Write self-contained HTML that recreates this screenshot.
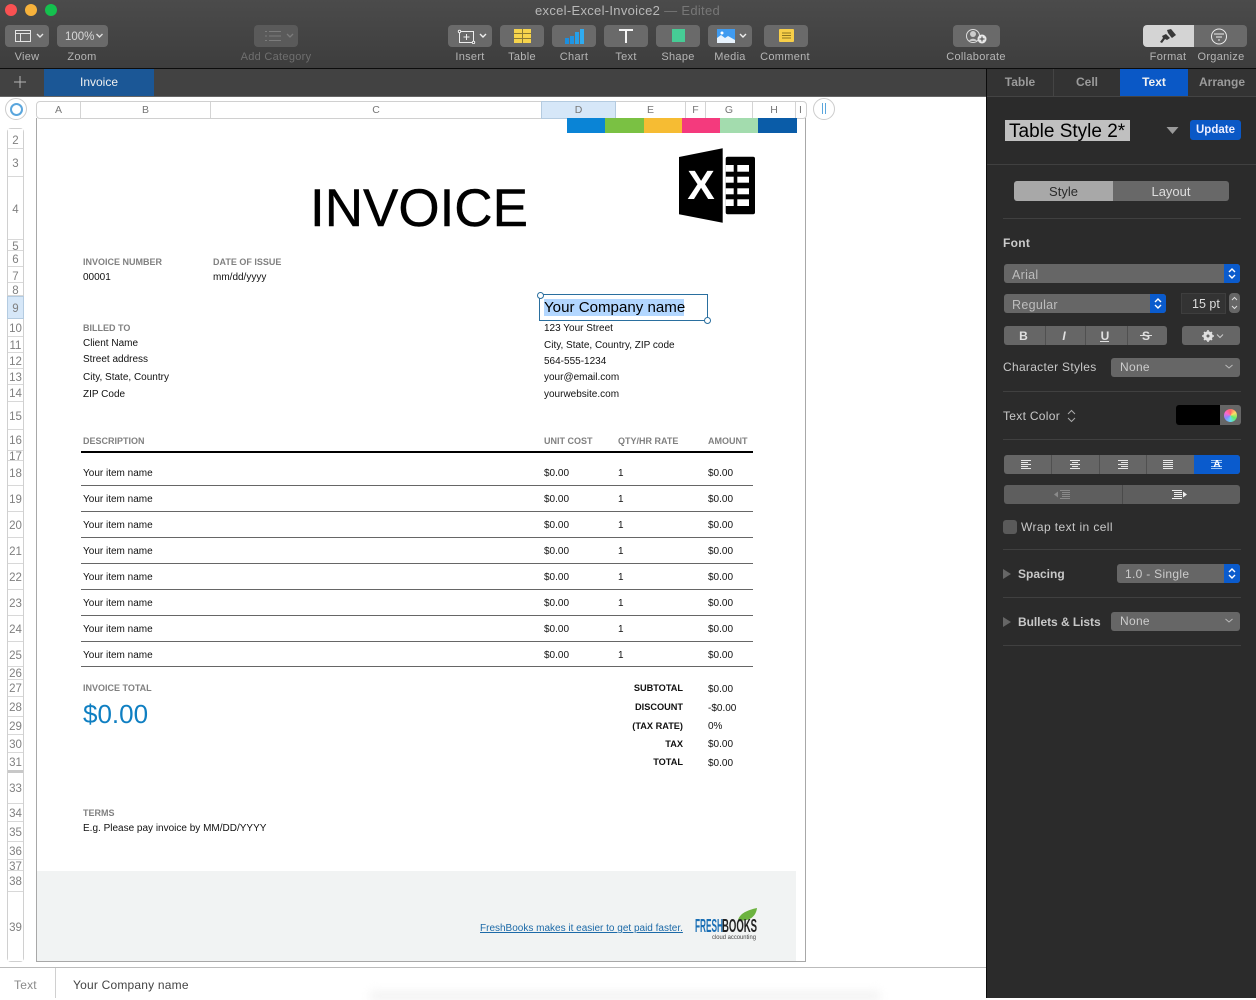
<!DOCTYPE html>
<html><head><meta charset="utf-8"><style>
html,body{margin:0;padding:0}
body{width:1256px;height:998px;position:relative;overflow:hidden;background:#fff;font-family:"Liberation Sans",sans-serif}
div,span.a,svg{position:absolute}
.t{white-space:nowrap;line-height:20px;height:20px}
.l{font-size:11px;color:#b5b5b5;letter-spacing:.3px;text-align:center;top:47px;width:80px;line-height:20px;height:20px;white-space:nowrap}
.b{top:25px;height:22px;background:#6a6a6a;border-radius:4px}
.d{font-size:10px;color:#111;white-space:nowrap;line-height:20px;height:20px;margin-top:1px}
.h{font-size:9px;font-weight:bold;color:#808080;white-space:nowrap;line-height:20px;height:20px}
.k{font-size:9.200px;font-weight:bold;color:#111;white-space:nowrap;line-height:20px;height:20px;text-align:right;width:100px;left:583px}
.r{left:8px;width:15px;text-align:center;color:#808080;font-size:11.500px;border-bottom:1px solid #d8d8d8;background:#fff;box-sizing:border-box;padding-top:1px}
.c{top:102px;height:16px;line-height:16px;text-align:center;color:#777;font-size:10.500px;border-right:1px solid #d4d4d4;box-sizing:border-box}
.ln{left:81px;width:672px;height:1px;background:#666}
.s{left:1003px;width:238px;height:1px;background:#404040}
.p{background:#666;border-radius:3px;height:19px}
.st{background:#0a5bcd;border-radius:0 3px 3px 0;height:19px;width:16px}
.side{font-size:12px;color:#c8c8c8;letter-spacing:.3px;white-space:nowrap;line-height:20px;height:20px}
</style></head><body>

<!-- toolbar -->
<div style="left:0;top:0;width:1256px;height:68px;background:linear-gradient(#4b4b4b,#3d3d3d)"></div>
<div style="left:0;top:68px;width:1256px;height:1px;background:#0c0c0c"></div>
<div style="left:5px;top:4px;width:12px;height:12px;border-radius:50%;background:#f95152"></div>
<div style="left:25px;top:4px;width:12px;height:12px;border-radius:50%;background:#f7b23b"></div>
<div style="left:45px;top:4px;width:12px;height:12px;border-radius:50%;background:#14c14e"></div>
<div class="t" style="left:535px;top:1px;font-size:13px;color:#b8b8b8;letter-spacing:.3px">excel-Excel-Invoice2 <span style="color:#777">— Edited</span></div>

<div class="b" style="left:5px;width:44px"></div>
<svg style="left:14px;top:29px" width="32" height="14" fill="none" stroke="#e4e4e4" stroke-width="1"><rect x="1.500" y="1.500" width="15" height="11"/><path d="M1.500 4.500H16.500M6.500 4.500V12.500"/><path d="M23 5l3 3 3-3" stroke-width="1.400"/></svg>
<div class="b" style="left:57px;width:51px"></div>
<div class="t" style="left:65px;top:26px;font-size:11.500px;color:#d8d8d8;margin-top:1px">100%</div>
<svg style="left:95px;top:32px" width="10" height="8" fill="none" stroke="#ddd" stroke-width="1.400"><path d="M1.500 2l3 3 3-3"/></svg>
<div class="b" style="left:254px;width:44px;background:#5a5a5a"></div>
<svg style="left:263px;top:29px" width="32" height="14" fill="none" stroke="#7c7c7c"><path d="M6 2.500H18M6 7H18M6 11.500H18"/><path d="M2 2.500H4M2 7H4M2 11.500H4"/><path d="M24 5l3 3 3-3" stroke-width="1.300"/></svg>

<div class="l" style="left:-13px">View</div>
<div class="l" style="left:42px">Zoom</div>
<div class="l" style="left:236px;color:#6f6f6f">Add Category</div>

<div class="b" style="left:448px;width:44px"></div>
<svg style="left:457px;top:28px" width="32" height="16" fill="none" stroke="#eee"><rect x="2.500" y="3.500" width="14" height="11"/><path d="M9.500 6V12M6.500 9H12.500"/><circle cx="2.500" cy="3.500" r="1.200" fill="#555"/><circle cx="16.500" cy="14.500" r="1.200" fill="#555"/><path d="M23 6l3 3 3-3" stroke-width="1.400"/></svg>
<div class="b" style="left:500px;width:44px"></div>
<svg style="left:514px;top:29px" width="17" height="14"><rect width="17" height="14" fill="#f6d44c"/><path d="M0 4.500H17M0 9.500H17M8.500 0V14" stroke="#8a7a35" stroke-width="1"/></svg>
<div class="b" style="left:552px;width:44px"></div>
<svg style="left:565px;top:28px" width="19" height="16"><rect x="0" y="10" width="4" height="6" fill="#1a8fe0"/><rect x="5" y="8" width="4" height="8" fill="#1f95e4"/><rect x="10" y="4" width="4" height="12" fill="#26a0ea"/><rect x="15" y="1" width="4" height="15" fill="#2fabf0"/></svg>
<div class="b" style="left:604px;width:44px"></div>
<svg style="left:618px;top:28px" width="16" height="16" fill="#f5f5f5"><rect x="1" y="1" width="14" height="2"/><rect x="7" y="1" width="2" height="14"/></svg>
<div class="b" style="left:656px;width:44px"></div>
<div style="left:672px;top:29px;width:13px;height:13px;background:#46cc95"></div>
<div class="b" style="left:708px;width:44px"></div>
<svg style="left:717px;top:29px" width="32" height="14"><rect width="18" height="14" fill="#3f9bf0"/><path d="M0 14V9l4-3 4 3 3-2 7 4v3z" fill="#e8f3fd"/><circle cx="5" cy="4" r="1.500" fill="#fff"/><path d="M23 5l3 3 3-3" fill="none" stroke="#eee" stroke-width="1.400"/></svg>
<div class="b" style="left:764px;width:44px"></div>
<svg style="left:779px;top:29px" width="15" height="13"><rect width="15" height="13" rx="1" fill="#f8cf48"/><path d="M3 4H12M3 6.500H12M3 9H12" stroke="#8c7420"/></svg>

<div class="l" style="left:430px">Insert</div>
<div class="l" style="left:482px">Table</div>
<div class="l" style="left:534px">Chart</div>
<div class="l" style="left:586px">Text</div>
<div class="l" style="left:638px">Shape</div>
<div class="l" style="left:690px">Media</div>
<div class="l" style="left:745px">Comment</div>

<div class="b" style="left:953px;width:47px"></div>
<svg style="left:966px;top:28px" width="23" height="17"><circle cx="7" cy="8" r="6.500" fill="none" stroke="#ddd"/><circle cx="7" cy="6" r="3" fill="#ccc"/><path d="M3 13c1-3 7-3 8 0z" fill="#ccc"/><circle cx="16" cy="11" r="4.500" fill="#e8e8e8"/><path d="M16 8.500V13.500M13.500 11H18.500" stroke="#444"/></svg>
<div class="l" style="left:936px">Collaborate</div>

<div class="b" style="left:1143px;width:51px;background:#d4d4d4;border-radius:4px 0 0 4px"></div>
<div class="b" style="left:1194px;width:53px;background:#6a6a6a;border-radius:0 4px 4px 0"></div>
<svg style="left:1159px;top:28px" width="18" height="17" fill="#383838"><path d="M8 2l4-1 5 6-4 3-1-1-3-4z"/><path d="M7 6l4 4-3 2-2-1-3 4-2-1 3-4-1-2z"/></svg>
<svg style="left:1210px;top:28px" width="18" height="17" fill="none" stroke="#eee"><circle cx="9" cy="8.500" r="7.500"/><path d="M4 6H14M6 9H12M8 12H10"/></svg>
<div class="l" style="left:1128px">Format</div>
<div class="l" style="left:1181px">Organize</div>

<!-- tab bar -->
<div style="left:0;top:69px;width:986px;height:27px;background:#424242"></div>
<div style="left:0;top:96px;width:986px;height:1px;background:#666"></div>
<svg style="left:14px;top:76px" width="12" height="12" stroke="#b4b4b4"><path d="M6 0V12M0 6H12"/></svg>
<div style="left:44px;top:69px;width:110px;height:27px;background:#1b5796"></div>
<div class="t" style="left:44px;top:72px;width:110px;text-align:center;font-size:12px;color:#f0f0f0">Invoice</div>

<!-- column headers -->
<div style="left:36px;top:101px;width:769px;height:16px;background:#fff;border:1px solid #d0d0d0;border-radius:4px;box-sizing:content-box"></div>
<div style="left:5px;top:98px;width:20px;height:20px;border-radius:50%;border:1px solid #ccc;background:#fff"></div>
<div style="left:10px;top:103px;width:9px;height:9px;border-radius:50%;border:2px solid #5aa6dd"></div>
<div class="c" style="left:37px;width:44px">A</div>
<div class="c" style="left:81px;width:130px">B</div>
<div class="c" style="left:211px;width:331px">C</div>
<div class="c" style="left:541px;width:75px;background:#d6e7f8;border:1px solid #b4cbe0;top:101px;height:18px">D</div>
<div class="c" style="left:616px;width:70px">E</div>
<div class="c" style="left:686px;width:20px">F</div>
<div class="c" style="left:706px;width:47px">G</div>
<div class="c" style="left:753px;width:43px">H</div>
<div class="c" style="left:796px;width:9px;border:0">I</div>
<div style="left:813px;top:98px;width:20px;height:20px;border-radius:50%;border:1px solid #ccc;background:#fff"></div>
<div style="left:822px;top:103px;width:1px;height:11px;background:#5aa6dd"></div>
<div style="left:825px;top:103px;width:1px;height:11px;background:#5aa6dd"></div>

<!-- row headers -->
<div style="left:7px;top:128px;width:17px;height:834px;border:1px solid #d0d0d0;border-radius:4px;box-sizing:border-box;background:#fff"></div>
<div class="r" style="top:129px;height:20px;line-height:22px">2</div>
<div class="r" style="top:149px;height:28px;line-height:28px">3</div>
<div class="r" style="top:177px;height:63px;line-height:64px">4</div>
<div class="r" style="top:240px;height:11px;line-height:12px">5</div>
<div class="r" style="top:251px;height:16px;line-height:17px">6</div>
<div class="r" style="top:267px;height:16px;line-height:18px">7</div>
<div class="r" style="top:283px;height:13px;line-height:14px">8</div>
<div class="r" style="top:296px;height:23px;line-height:22px;background:#d6e7f8;border:1px solid #b4cbe0;left:7px;width:17px">9</div>
<div class="r" style="top:319px;height:18px;line-height:18px">10</div>
<div class="r" style="top:337px;height:16px;line-height:16px">11</div>
<div class="r" style="top:353px;height:16px;line-height:16px">12</div>
<div class="r" style="top:369px;height:16px;line-height:16px">13</div>
<div class="r" style="top:385px;height:17px;line-height:17px">14</div>
<div class="r" style="top:402px;height:28px;line-height:28px">15</div>
<div class="r" style="top:430px;height:21px;line-height:21px">16</div>
<div class="r" style="top:451px;height:10px;line-height:10px">17</div>
<div class="r" style="top:461px;height:25px;line-height:25px">18</div>
<div class="r" style="top:486px;height:26px;line-height:26px">19</div>
<div class="r" style="top:512px;height:26px;line-height:26px">20</div>
<div class="r" style="top:538px;height:26px;line-height:26px">21</div>
<div class="r" style="top:564px;height:26px;line-height:26px">22</div>
<div class="r" style="top:590px;height:26px;line-height:26px">23</div>
<div class="r" style="top:616px;height:26px;line-height:26px">24</div>
<div class="r" style="top:642px;height:25px;line-height:26px">25</div>
<div class="r" style="top:667px;height:13px;line-height:13px">26</div>
<div class="r" style="top:680px;height:17px;line-height:17px">27</div>
<div class="r" style="top:697px;height:20px;line-height:20px">28</div>
<div class="r" style="top:717px;height:18px;line-height:18px">29</div>
<div class="r" style="top:735px;height:18px;line-height:18px">30</div>
<div class="r" style="top:753px;height:18px;line-height:18px">31</div>
<div style="left:8px;top:770px;width:15px;height:3px;background:#c8c8c8"></div>
<div class="r" style="top:773px;height:31px;line-height:30px">33</div>
<div class="r" style="top:804px;height:18px;line-height:18px">34</div>
<div class="r" style="top:822px;height:20px;line-height:20px">35</div>
<div class="r" style="top:842px;height:18px;line-height:18px">36</div>
<div class="r" style="top:860px;height:11px;line-height:12px">37</div>
<div class="r" style="top:871px;height:21px;line-height:21px">38</div>
<div class="r" style="top:892px;height:69px;line-height:70px;border:0">39</div>

<!-- page -->
<div style="left:36px;top:118px;width:1px;height:844px;background:#a8a8a8"></div>
<div style="left:805px;top:118px;width:1px;height:844px;background:#a8a8a8"></div>
<div style="left:36px;top:961px;width:770px;height:1px;background:#a8a8a8"></div>
<div style="left:37px;top:871px;width:759px;height:90px;background:#f1f3f3"></div>

<div style="left:567px;top:118px;width:38px;height:15px;background:#0a84d6"></div>
<div style="left:605px;top:118px;width:39px;height:15px;background:#7ac143"></div>
<div style="left:644px;top:118px;width:38px;height:15px;background:#f6bc33"></div>
<div style="left:682px;top:118px;width:38px;height:15px;background:#f43a7d"></div>
<div style="left:720px;top:118px;width:38px;height:15px;background:#a3dcae"></div>
<div style="left:758px;top:118px;width:39px;height:15px;background:#0a5ca8"></div>

<div class="t" style="left:310px;top:199px;font-size:53px;color:#000;-webkit-text-stroke:.4px #000">INVOICE</div>

<svg style="left:678px;top:148px" width="78" height="76"><path d="M1 9L44.700 0.300V74.700L1 66.300Z" fill="#000"/><rect x="47.700" y="8.700" width="29.300" height="57.600" rx="2" fill="#000"/><g fill="#fff"><rect x="47.700" y="17" width="8" height="6.700"/><rect x="59.300" y="17" width="11.700" height="6.700"/><rect x="47.700" y="28.700" width="8" height="6"/><rect x="59.300" y="28.700" width="11.700" height="6"/><rect x="47.700" y="40.300" width="8" height="6"/><rect x="59.300" y="40.300" width="11.700" height="6"/><rect x="47.700" y="51.300" width="8" height="6.700"/><rect x="59.300" y="51.300" width="11.700" height="6.700"/></g><text x="23" y="51" font-family="Liberation Sans" font-weight="bold" font-size="41" fill="#fff" text-anchor="middle">X</text></svg>

<div class="h" style="left:83px;top:252px">INVOICE NUMBER</div>
<div class="h" style="left:213px;top:252px">DATE OF ISSUE</div>
<div class="d" style="left:83px;top:267px">00001</div>
<div class="d" style="left:213px;top:267px">mm/dd/yyyy</div>

<div style="left:539px;top:294px;width:167px;height:25px;border:1px solid #2a6f9f"></div>
<div style="left:544px;top:299px;width:140px;height:17px;background:#b3d7ff"></div>
<div class="t" style="left:544px;top:298px;font-size:15.100px;color:#000">Your Company name</div>
<div style="left:537px;top:292px;width:5px;height:5px;border-radius:50%;border:1px solid #2a6f9f;background:#fff"></div>
<div style="left:704px;top:317px;width:5px;height:5px;border-radius:50%;border:1px solid #2a6f9f;background:#fff"></div>

<div class="h" style="left:83px;top:318px">BILLED TO</div>
<div class="d" style="left:83px;top:333px">Client Name</div>
<div class="d" style="left:83px;top:349px">Street address</div>
<div class="d" style="left:83px;top:367px">City, State, Country</div>
<div class="d" style="left:83px;top:384px">ZIP Code</div>
<div class="d" style="left:544px;top:318px">123 Your Street</div>
<div class="d" style="left:544px;top:335px">City, State, Country, ZIP code</div>
<div class="d" style="left:544px;top:351px">564-555-1234</div>
<div class="d" style="left:544px;top:367px">your@email.com</div>
<div class="d" style="left:544px;top:384px">yourwebsite.com</div>

<div class="h" style="left:83px;top:431px">DESCRIPTION</div>
<div class="h" style="left:544px;top:431px">UNIT COST</div>
<div class="h" style="left:618px;top:431px">QTY/HR RATE</div>
<div class="h" style="left:708px;top:431px">AMOUNT</div>
<div style="left:81px;top:451px;width:672px;height:2px;background:#000"></div>

<div class="d" style="left:83px;top:463px">Your item name</div><div class="d" style="left:544px;top:463px">$0.00</div><div class="d" style="left:618px;top:463px">1</div><div class="d" style="left:708px;top:463px">$0.00</div><div class="ln" style="top:485px"></div>
<div class="d" style="left:83px;top:489px">Your item name</div><div class="d" style="left:544px;top:489px">$0.00</div><div class="d" style="left:618px;top:489px">1</div><div class="d" style="left:708px;top:489px">$0.00</div><div class="ln" style="top:511px"></div>
<div class="d" style="left:83px;top:515px">Your item name</div><div class="d" style="left:544px;top:515px">$0.00</div><div class="d" style="left:618px;top:515px">1</div><div class="d" style="left:708px;top:515px">$0.00</div><div class="ln" style="top:537px"></div>
<div class="d" style="left:83px;top:541px">Your item name</div><div class="d" style="left:544px;top:541px">$0.00</div><div class="d" style="left:618px;top:541px">1</div><div class="d" style="left:708px;top:541px">$0.00</div><div class="ln" style="top:563px"></div>
<div class="d" style="left:83px;top:567px">Your item name</div><div class="d" style="left:544px;top:567px">$0.00</div><div class="d" style="left:618px;top:567px">1</div><div class="d" style="left:708px;top:567px">$0.00</div><div class="ln" style="top:589px"></div>
<div class="d" style="left:83px;top:593px">Your item name</div><div class="d" style="left:544px;top:593px">$0.00</div><div class="d" style="left:618px;top:593px">1</div><div class="d" style="left:708px;top:593px">$0.00</div><div class="ln" style="top:615px"></div>
<div class="d" style="left:83px;top:619px">Your item name</div><div class="d" style="left:544px;top:619px">$0.00</div><div class="d" style="left:618px;top:619px">1</div><div class="d" style="left:708px;top:619px">$0.00</div><div class="ln" style="top:641px"></div>
<div class="d" style="left:83px;top:645px">Your item name</div><div class="d" style="left:544px;top:645px">$0.00</div><div class="d" style="left:618px;top:645px">1</div><div class="d" style="left:708px;top:645px">$0.00</div><div class="ln" style="top:666px"></div>

<div class="h" style="left:83px;top:678px">INVOICE TOTAL</div>
<div class="t" style="left:83px;top:704px;font-size:26px;color:#0f7fc2">$0.00</div>
<div class="k" style="top:678px">SUBTOTAL</div><div class="d" style="left:708px;top:679px">$0.00</div>
<div class="k" style="top:697px">DISCOUNT</div><div class="d" style="left:708px;top:698px">-$0.00</div>
<div class="k" style="top:716px">(TAX RATE)</div><div class="d" style="left:708px;top:716px">0%</div>
<div class="k" style="top:734px">TAX</div><div class="d" style="left:708px;top:734px">$0.00</div>
<div class="k" style="top:752px">TOTAL</div><div class="d" style="left:708px;top:753px">$0.00</div>

<div class="h" style="left:83px;top:803px">TERMS</div>
<div class="d" style="left:83px;top:818px">E.g. Please pay invoice by MM/DD/YYYY</div>

<div class="t" style="left:480px;top:919px;font-size:10px;color:#1c6aa8;text-decoration:underline">FreshBooks makes it easier to get paid faster.</div>
<svg style="left:693px;top:907px" width="66" height="36"><path d="M45 13C47 6 55 3 64 1C63 9 57 15 45 13Z" fill="#6cb33f"/><text x="2" y="25" font-family="Liberation Sans" font-weight="bold" font-size="18" fill="#1a6fb5" textLength="28" lengthAdjust="spacingAndGlyphs">FRESH</text><text x="29" y="25" font-family="Liberation Sans" font-weight="bold" font-size="18" fill="#222" textLength="35" lengthAdjust="spacingAndGlyphs">BOOKS</text><text x="19" y="32" font-family="Liberation Sans" font-size="6" fill="#444" textLength="44" lengthAdjust="spacingAndGlyphs">cloud accounting</text></svg>

<!-- bottom bar -->
<div style="left:0;top:967px;width:986px;height:1px;background:#bbb"></div>
<div style="left:0;top:968px;width:986px;height:30px;background:#fff"></div>
<div style="left:370px;top:992px;width:510px;height:8px;background:#f0f0f0;filter:blur(5px)"></div>
<div style="left:55px;top:968px;width:1px;height:30px;background:#d0d0d0"></div>
<div class="t" style="left:14px;top:975px;font-size:12px;color:#8a8a8a;letter-spacing:.2px">Text</div>
<div class="t" style="left:73px;top:975px;font-size:12px;color:#444;letter-spacing:.2px">Your Company name</div>

<!-- sidebar -->
<div style="left:986px;top:69px;width:270px;height:929px;background:#2b2b2b"></div>
<div style="left:986px;top:69px;width:1px;height:929px;background:#0c0c0c"></div>
<div style="left:987px;top:69px;width:269px;height:27px;background:#333"></div>
<div style="left:987px;top:96px;width:269px;height:1px;background:#444"></div>
<div style="left:1053px;top:69px;width:1px;height:27px;background:#444"></div>
<div style="left:1120px;top:69px;width:68px;height:27px;background:#0a58c6"></div>
<div class="t" style="left:987px;top:72px;width:66px;text-align:center;font-size:12px;font-weight:bold;color:#9b9b9b">Table</div>
<div class="t" style="left:1054px;top:72px;width:66px;text-align:center;font-size:12px;font-weight:bold;color:#9b9b9b">Cell</div>
<div class="t" style="left:1120px;top:72px;width:68px;text-align:center;font-size:12px;font-weight:bold;color:#f2f2f2">Text</div>
<div class="t" style="left:1188px;top:72px;width:68px;text-align:center;font-size:12px;font-weight:bold;color:#9b9b9b">Arrange</div>

<div style="left:1005px;top:120px;width:125px;height:21px;background:#c0c0c0"></div>
<div class="t" style="left:1009px;top:121px;font-size:19px;line-height:21px;color:#000">Table Style 2*</div>
<svg style="left:1166px;top:126px" width="13" height="9"><path d="M0.500 1H12.500L6.500 8Z" fill="#9a9a9a"/></svg>
<div style="left:1190px;top:120px;width:51px;height:20px;background:#0a58c6;border-radius:3px"></div>
<div class="t" style="left:1190px;top:120px;width:51px;text-align:center;font-size:11.500px;font-weight:bold;color:#eef">Update</div>
<div style="left:987px;top:164px;width:269px;height:1px;background:#404040"></div>

<div style="left:1014px;top:181px;width:99px;height:20px;background:#a8a8a8;border-radius:3px 0 0 3px"></div>
<div style="left:1113px;top:181px;width:116px;height:20px;background:#686868;border-radius:0 3px 3px 0"></div>
<div class="t" style="left:1014px;top:182px;width:99px;text-align:center;font-size:13px;color:#2a2a2a">Style</div>
<div class="t" style="left:1113px;top:182px;width:116px;text-align:center;font-size:13px;color:#ddd">Layout</div>
<div class="s" style="top:218px"></div>

<div class="side" style="left:1003px;top:233px;font-weight:bold;color:#ccc">Font</div>
<div class="p" style="left:1004px;top:264px;width:236px"></div><div class="st" style="left:1224px;top:264px"></div>
<div class="side" style="left:1012px;top:265px;font-size:12.500px;color:#bdbdbd">Arial</div>
<svg style="left:1227px;top:266px" width="10" height="15" fill="none" stroke="#fff" stroke-width="1.400"><path d="M2 6l3-3 3 3M2 9l3 3 3-3"/></svg>
<div class="p" style="left:1004px;top:294px;width:162px"></div><div class="st" style="left:1150px;top:294px"></div>
<div class="side" style="left:1012px;top:295px;font-size:12.500px;color:#bdbdbd">Regular</div>
<svg style="left:1153px;top:296px" width="10" height="15" fill="none" stroke="#fff" stroke-width="1.400"><path d="M2 6l3-3 3 3M2 9l3 3 3-3"/></svg>
<div style="left:1181px;top:293px;width:43px;height:19px;background:#333;border:1px solid #3e3e3e"></div>
<div class="side" style="left:1192px;top:294px;font-size:12.500px;letter-spacing:0;color:#ddd">15 pt</div>
<div style="left:1229px;top:293px;width:11px;height:20px;background:#666;border-radius:4px"></div>
<svg style="left:1230px;top:295px" width="9" height="16" fill="none" stroke="#ddd"><path d="M2 5l2.500-2.500L7 5M2 11l2.500 2.500L7 11"/></svg>

<div class="p" style="left:1004px;top:326px;width:163px"></div>
<div style="left:1045px;top:326px;width:1px;height:19px;background:#505050"></div>
<div style="left:1085px;top:326px;width:1px;height:19px;background:#505050"></div>
<div style="left:1127px;top:326px;width:1px;height:19px;background:#505050"></div>
<div class="t" style="left:1003px;top:327px;width:41px;line-height:19px;text-align:center;font-size:12px;font-weight:bold;color:#e0e0e0">B</div>
<div class="t" style="left:1044px;top:327px;width:40px;line-height:19px;text-align:center;font-size:12px;font-weight:bold;font-style:italic;color:#e0e0e0">I</div>
<div class="t" style="left:1084px;top:327px;width:42px;line-height:19px;text-align:center;font-size:12px;font-weight:bold;color:#e0e0e0">U</div>
<div style="left:1100px;top:341px;width:9px;height:1px;background:#e0e0e0"></div>
<div class="t" style="left:1126px;top:327px;width:40px;line-height:19px;text-align:center;font-size:12px;font-weight:bold;color:#e0e0e0">S</div>
<div style="left:1140px;top:335px;width:12px;height:1px;background:#e0e0e0"></div>
<div class="p" style="left:1182px;top:326px;width:58px"></div>
<svg style="left:1201px;top:329px" width="26" height="14"><circle cx="7" cy="7" r="3.500" fill="none" stroke="#e0e0e0" stroke-width="2.500"/><path d="M7 1V13M1 7H13M3 3L11 11M11 3L3 11" stroke="#e0e0e0" stroke-width="1.500"/><circle cx="7" cy="7" r="1.500" fill="#666"/><path d="M16 5.500l3 3 3-3" fill="none" stroke="#ccc"/></svg>

<div class="side" style="left:1003px;top:357px">Character Styles</div>
<div class="p" style="left:1111px;top:358px;width:129px"></div>
<div class="side" style="left:1120px;top:357px;color:#ccc">None</div>
<svg style="left:1224px;top:363px" width="10" height="8" fill="none" stroke="#bbb"><path d="M1.500 2l3.500 3 3.500-3"/></svg>
<div class="s" style="top:391px"></div>

<div class="side" style="left:1003px;top:406px">Text Color</div>
<svg style="left:1066px;top:408px" width="11" height="16" fill="none" stroke="#aaa"><path d="M2 6l3.500-3.500L9 6M2 10l3.500 3.500L9 10"/></svg>
<div style="left:1176px;top:405px;width:44px;height:20px;background:#000;border-radius:3px 0 0 3px"></div>
<div style="left:1220px;top:405px;width:21px;height:20px;background:#666;border-radius:0 3px 3px 0"></div>
<div style="left:1224px;top:409px;width:13px;height:13px;border-radius:50%;background:conic-gradient(#f66,#fd6,#6e6,#6de,#88f,#f6c,#f66)"></div>
<div class="s" style="top:439px"></div>

<div class="p" style="left:1004px;top:455px;width:236px"></div>
<div style="left:1194px;top:455px;width:46px;height:19px;background:#0a5bcd;border-radius:0 3px 3px 0"></div>
<div style="left:1051px;top:455px;width:1px;height:19px;background:#505050"></div>
<div style="left:1099px;top:455px;width:1px;height:19px;background:#505050"></div>
<div style="left:1146px;top:455px;width:1px;height:19px;background:#505050"></div>
<svg style="left:1004px;top:455px" width="236" height="19" fill="none" stroke="#e8e8e8"><path d="M17 5.500H27M17 7.500H24M17 9.500H27M17 11.500H24M17 13.500H27"/><path d="M66 5.500H76M68 7.500H74M66 9.500H76M68 11.500H74M66 13.500H76"/><path d="M114 5.500H124M117 7.500H124M114 9.500H124M117 11.500H124M114 13.500H124"/><path d="M159 5.500H169M159 7.500H169M159 9.500H169M159 11.500H169M159 13.500H169"/><path d="M207 5.500H218M207 13.500H218M207 7.500H218M207 11.500H218" stroke="#9cc4f2"/></svg>
<div class="t" style="left:1194px;top:455px;width:46px;line-height:19px;text-align:center;font-size:10px;font-weight:bold;color:#fff">A</div>

<div class="p" style="left:1004px;top:485px;width:236px;background:#5e5e5e"></div>
<div style="left:1122px;top:485px;width:1px;height:19px;background:#4a4a4a"></div>
<svg style="left:1004px;top:485px" width="236" height="19"><path d="M50 9.500L54 6.500V12.500Z" fill="#8a8a8a"/><path d="M56 5.500H66M58 7.500H66M58 9.500H66M58 11.500H66M56 13.500H66" stroke="#8a8a8a"/><path d="M168 5.500H178M170 7.500H178M170 9.500H178M170 11.500H178M168 13.500H178" stroke="#eee"/><path d="M179 6.500L183 9.500L179 12.500Z" fill="#eee"/></svg>

<div style="left:1003px;top:520px;width:14px;height:14px;background:#5a5a5a;border-radius:3px"></div>
<div class="side" style="left:1021px;top:517px;letter-spacing:.4px">Wrap text in cell</div>
<div class="s" style="top:549px"></div>

<svg style="left:1003px;top:569px" width="8" height="10"><path d="M0 0L8 5L0 10Z" fill="#666"/></svg>
<div class="side" style="left:1018px;top:564px;font-weight:bold;font-size:12px;letter-spacing:0;color:#c8c8c8">Spacing</div>
<div class="p" style="left:1117px;top:564px;width:123px"></div><div class="st" style="left:1224px;top:564px"></div>
<div class="side" style="left:1125px;top:564px;color:#ccc">1.0 - Single</div>
<svg style="left:1227px;top:566px" width="10" height="15" fill="none" stroke="#fff" stroke-width="1.400"><path d="M2 6l3-3 3 3M2 9l3 3 3-3"/></svg>
<div class="s" style="top:597px"></div>

<svg style="left:1003px;top:617px" width="8" height="10"><path d="M0 0L8 5L0 10Z" fill="#666"/></svg>
<div class="side" style="left:1018px;top:612px;font-weight:bold;letter-spacing:-.05px;color:#c8c8c8">Bullets &amp; Lists</div>
<div class="p" style="left:1111px;top:612px;width:129px"></div>
<div class="side" style="left:1120px;top:611px;color:#ccc">None</div>
<svg style="left:1224px;top:617px" width="10" height="8" fill="none" stroke="#bbb"><path d="M1.500 2l3.500 3 3.500-3"/></svg>
<div class="s" style="top:645px"></div>
</body></html>
